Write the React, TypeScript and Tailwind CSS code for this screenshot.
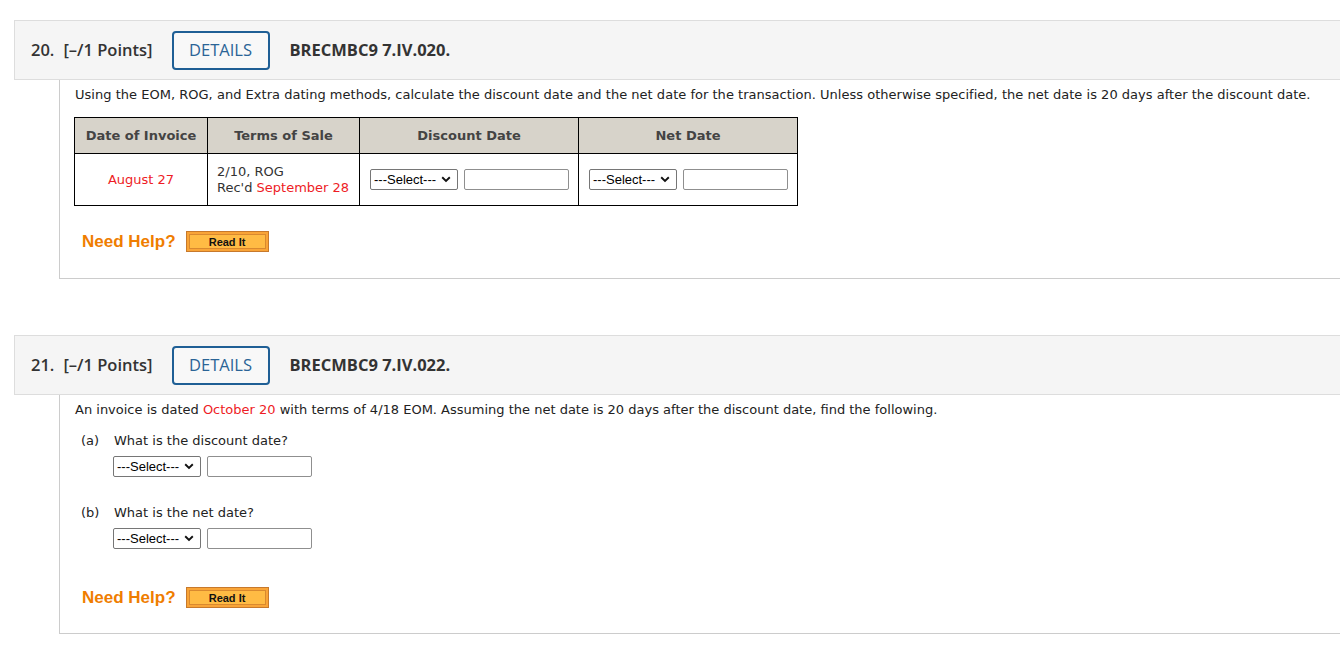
import React from "react";

const body = { fontFamily: '"DejaVu Sans", Verdana, sans-serif' };
const head = { fontFamily: '"Open Sans", Arial, sans-serif' };
const arial = { fontFamily: '"Liberation Sans", Arial, sans-serif' };

function Chevron() {
  return (
    <svg width="10" height="7" viewBox="0 0 10 7" className="ml-[5px]">
      <path d="M1.2 1.3 L5 5 L8.8 1.3" fill="none" stroke="#111" strokeWidth="1.9" />
    </svg>
  );
}

function FakeSelect() {
  return (
    <div
      className="flex items-center h-[21px] w-[88px] border border-[#767676] rounded-[2px] bg-white pl-[3px] text-[13px] text-black shrink-0"
      style={arial}
    >
      <span>---Select---</span>
      <Chevron />
    </div>
  );
}

function TextBox() {
  return <div className="h-[21px] w-[105px] border border-[#8f8f8f] rounded-[2px] bg-white shrink-0" />;
}

function Answer() {
  return (
    <div className="flex items-center gap-[6px]">
      <FakeSelect />
      <TextBox />
    </div>
  );
}

function Header({ num, code }: { num: string; code: string }) {
  return (
    <div
      className="flex items-center h-[60px] bg-[#f5f5f5] border-t border-b border-l border-[#dddddd] pl-[16px] text-[16.5px] font-semibold text-[#333333]"
      style={head}
    >
      <span>{num}</span>
      <span className="ml-[9px]">[–/1 Points]</span>
      <div className="ml-[19px] flex items-center justify-center w-[98px] h-[39px] border-2 border-[#1f5f95] rounded-[4px] bg-[#f8f8f8] text-[#2a6496] font-normal">
        DETAILS
      </div>
      <span className="ml-[20px] font-bold">{code}</span>
    </div>
  );
}

function NeedHelp() {
  return (
    <div className="flex items-center ml-[7px]">
      <span className="text-[17px] font-bold text-[#ef7d00]" style={arial}>
        Need Help?
      </span>
      <div className="ml-[10px] w-[83px] h-[21px] border border-[#c7792c] bg-[#f9a437] p-[2px]">
        <div
          className="w-full h-full border border-[#d9892f] bg-[#ffbb44] flex items-center justify-center text-[11px] font-bold text-[#111]"
          style={arial}
        >
          Read It
        </div>
      </div>
    </div>
  );
}

export default function App() {
  const red = "text-[#ee1c25]";
  return (
    <div className="w-[1340px] h-[670px] overflow-hidden bg-white pt-[20px] pl-[14px] text-[#222222]" style={body}>
      {/* Question 20 */}
      <Header num="20." code="BRECMBC9 7.IV.020." />
      <div className="ml-[45px] border-l border-b border-[#cccccc] pl-[15px] pt-[7px] h-[199px] text-[13px]">
        <p className="leading-[16px] whitespace-nowrap tracking-[0.02px]">
          Using the EOM, ROG, and Extra dating methods, calculate the discount date and the net date for the transaction. Unless otherwise specified, the net date is 20 days after the discount date.
        </p>
        <table className="mt-[14px] -ml-[1px] border-collapse border border-black text-[13px]">
          <thead>
            <tr className="bg-[#d7d3ca] text-[#444444] h-[36px]">
              <th className="border border-black w-[133px] font-bold">Date of Invoice</th>
              <th className="border border-black w-[152px] font-bold">Terms of Sale</th>
              <th className="border border-black w-[219px] font-bold">Discount Date</th>
              <th className="border border-black w-[219px] font-bold">Net Date</th>
            </tr>
          </thead>
          <tbody>
            <tr className="h-[52px]">
              <td className={`border border-black text-center ${red}`}>August 27</td>
              <td className="border border-black pl-[9px] leading-[16px] text-[#333]">
                2/10, ROG
                <br />
                Rec'd <span className={red}>September 28</span>
              </td>
              <td className="border border-black pl-[10px]">
                <Answer />
              </td>
              <td className="border border-black pl-[10px]">
                <Answer />
              </td>
            </tr>
          </tbody>
        </table>
        <div className="mt-[23px]">
          <NeedHelp />
        </div>
      </div>

      <div className="h-[56px]" />

      {/* Question 21 */}
      <Header num="21." code="BRECMBC9 7.IV.022." />
      <div className="ml-[45px] border-l border-b border-[#cccccc] pl-[15px] pt-[7px] h-[239px] text-[13px]">
        <p className="leading-[16px] whitespace-nowrap">
          An invoice is dated <span className={red}>October 20</span> with terms of 4/18 EOM. Assuming the net date is 20 days after the discount date, find the following.
        </p>
        <div className="mt-[15px] ml-[6px]">
          <div className="flex leading-[16px]">
            <span className="w-[33px]">(a)</span>
            <span>What is the discount date?</span>
          </div>
          <div className="ml-[32px] mt-[7px]">
            <Answer />
          </div>
          <div className="flex leading-[16px] mt-[28px]">
            <span className="w-[33px]">(b)</span>
            <span>What is the net date?</span>
          </div>
          <div className="ml-[32px] mt-[7px]">
            <Answer />
          </div>
        </div>
        <div className="mt-[36px]">
          <NeedHelp />
        </div>
      </div>
    </div>
  );
}
